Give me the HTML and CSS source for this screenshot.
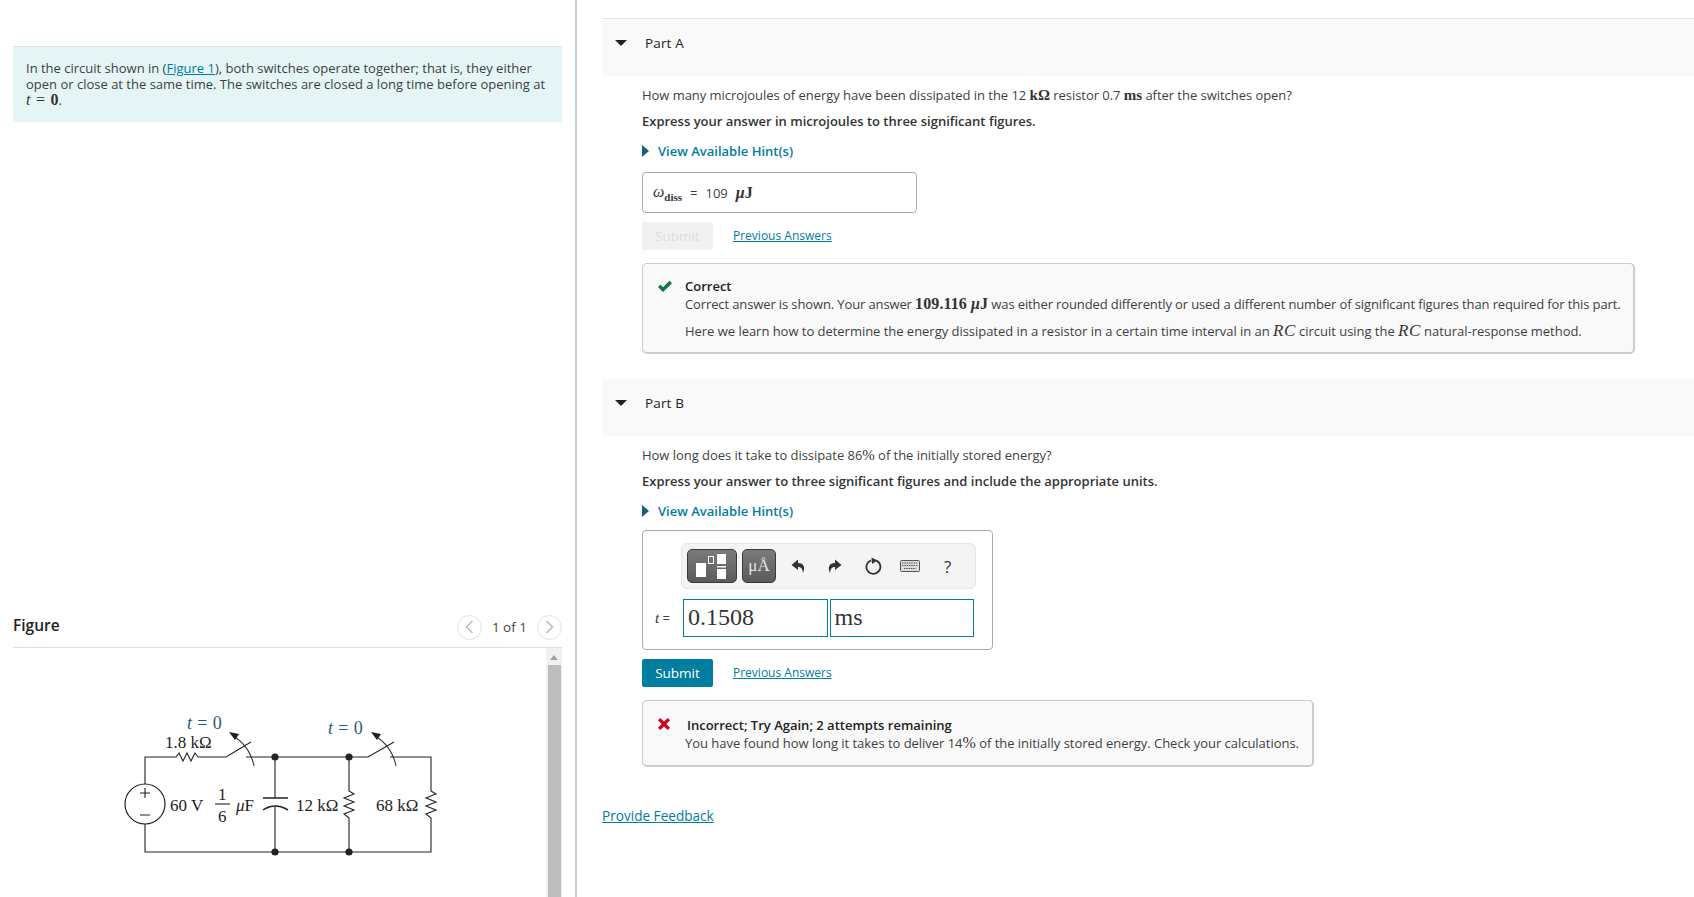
FILE: index.html
```html
<!DOCTYPE html>
<html lang="en">
<head>
    <meta charset="UTF-8">
    <title>Part A and Part B</title>
    <link rel="stylesheet" href="styles.css">
</head>
<body>
    <!-- Left pane: intro and figure -->
    <div class="left-pane">
        <div class="intro">
            In the circuit shown in (<a href="#">Figure 1</a>), both switches operate together; that is, they either open or close at the same time. The switches are closed a long time before opening at <span class="math"><i>t</i> = <b>0</b></span>.
        </div>

        <div class="figure-head">
            <h2>Figure</h2>
            <div class="pager">
                <span class="pager-btn">
                    <svg width="9" height="14" viewBox="0 0 9 14"><path d="M7.5 1 L1.5 7 L7.5 13" fill="none" stroke="#b4bcc6" stroke-width="1.6"/></svg>
                </span>
                <span class="pager-text">1 of 1</span>
                <span class="pager-btn">
                    <svg width="9" height="14" viewBox="0 0 9 14"><path d="M1.5 1 L7.5 7 L1.5 13" fill="none" stroke="#b4bcc6" stroke-width="1.6"/></svg>
                </span>
            </div>
        </div>

        <div class="figure-body">
            <div class="figure-view">
                <svg class="circuit" width="360" height="180" viewBox="0 0 360 180">
                    <g fill="none" stroke="#222" stroke-width="1.1">
                        <path d="M45 94 V67 H76 L79 63 L83 71 L87 63 L91 71 L95 63 L98 67 H126 L151 52"/>
                        <path d="M146 67 H268 L294 52"/>
                        <path d="M290 67 H331 V101 L336 104 L326 108 L336 112 L326 116 L336 120 L326 124 L331 128 V162 H45 V134"/>
                        <path d="M249 67 V101 L254 104 L244 108 L254 112 L244 116 L254 120 L244 124 L249 128 V162"/>
                        <path d="M175 67 V108 M175 117 V162"/>
                        <path d="M163 108 H188" stroke-width="1.5"/>
                        <path d="M163 120 Q175 112 188 120" stroke-width="1.5"/>
                        <circle cx="45" cy="114" r="20" stroke-width="1.2"/>
                        <path d="M40 103 H50 M45 98 V108 M40 125 H50"/>
                        <path d="M115 114 H130"/>
                        <path d="M154 76 Q150 56 132 45" stroke="#333"/>
                        <path d="M296 76 Q292 56 274 45" stroke="#333"/>
                    </g>
                    <path d="M129 42 L139 44 L135 50 Z M271 42 L281 44 L277 50 Z" fill="#222"/>
                    <g fill="#222">
                        <circle cx="175" cy="67" r="3.6"/>
                        <circle cx="249" cy="67" r="3.6"/>
                        <circle cx="175" cy="162" r="3.6"/>
                        <circle cx="249" cy="162" r="3.6"/>
                    </g>
                    <g class="circuit-label">
                        <text x="87" y="39" class="circuit-t"><tspan font-style="italic">t</tspan> = 0</text>
                        <text x="228" y="44" class="circuit-t"><tspan font-style="italic">t</tspan> = 0</text>
                        <text x="65" y="58">1.8 kΩ</text>
                        <text x="70" y="121">60 V</text>
                        <text x="118" y="110">1</text>
                        <text x="118" y="132">6</text>
                        <text x="136" y="121"><tspan font-style="italic">μ</tspan>F</text>
                        <text x="196" y="121">12 kΩ</text>
                        <text x="276" y="121">68 kΩ</text>
                    </g>
                </svg>
            </div>
            <div class="scrollbar">
                <span class="scroll-arrow"></span>
                <span class="scroll-thumb"></span>
            </div>
        </div>
    </div>

    <!-- Right pane: the parts -->
    <div class="right-pane">
        <div class="part-head first">
            <span class="caret-down"></span>
            <span class="part-title">Part A</span>
        </div>
        <div class="part-body">
            <p class="question">How many microjoules of energy have been dissipated in the 12 <b class="math">kΩ</b> resistor 0.7 <b class="math">ms</b> after the switches open?</p>
            <p class="instruction">Express your answer in microjoules to three significant figures.</p>
            <a class="hint" href="#"><span class="caret-right"></span>View Available Hint(s)</a>

            <div class="answer-box">
                <span class="math"><i class="omega">ω</i><sub>diss</sub></span>
                <span class="equals">=</span>
                <span>109</span>
                <span class="math unit"><i>μ</i>J</span>
            </div>

            <div class="actions">
                <button class="submit disabled">Submit</button>
                <a class="prev" href="#">Previous Answers</a>
            </div>

            <div class="feedback wide">
                <svg class="fb-icon" width="16" height="13" viewBox="0 0 16 13"><path d="M1 7 L3.5 4.6 L6 7.2 L12.6 0.8 L15 3.2 L6 12 Z" fill="#11763d"/></svg>
                <div class="fb-title">Correct</div>
                <div class="fb-line tight">Correct answer is shown. Your answer <b class="math big">109.116 <i>μ</i>J</b> was either rounded differently or used a different number of significant figures than required for this part.</div>
                <div class="fb-line second">Here we learn how to determine the energy dissipated in a resistor in a certain time interval in an <span class="math rc">RC</span> circuit using the <span class="math rc">RC</span> natural-response method.</div>
            </div>
        </div>

        <div class="part-head">
            <span class="caret-down"></span>
            <span class="part-title">Part B</span>
        </div>
        <div class="part-body part-b">
            <p class="question">How long does it take to dissipate 86<span class="math pct">%</span> of the initially stored energy?</p>
            <p class="instruction">Express your answer to three significant figures and include the appropriate units.</p>
            <a class="hint" href="#"><span class="caret-right"></span>View Available Hint(s)</a>

            <div class="math-box">
                <div class="toolbar">
                    <span class="tool-btn templates">
                        <svg width="36" height="26" viewBox="0 0 36 26">
                            <rect x="2" y="10" width="10" height="14" fill="#fff"/>
                            <rect x="14.5" y="3.5" width="5" height="7" fill="none" stroke="#fff"/>
                            <rect x="23" y="1" width="9" height="10" fill="#fff"/>
                            <rect x="23" y="13" width="9" height="1.5" fill="#fff"/>
                            <rect x="23" y="16" width="9" height="10" fill="#fff"/>
                        </svg>
                    </span>
                    <span class="tool-btn units">μÅ</span>
                    <svg class="tool-icon undo" width="16" height="16" viewBox="0 0 16 16"><path d="M8 1.5 L1.5 7 L8 12 V9 C11 9 12.5 10.5 13 15 C15.5 9.5 14 5 8 5 Z" fill="#333"/></svg>
                    <svg class="tool-icon redo" width="16" height="16" viewBox="0 0 16 16"><path d="M8 1.5 L14.5 7 L8 12 V9 C5 9 3.5 10.5 3 15 C0.5 9.5 2 5 8 5 Z" fill="#333"/></svg>
                    <svg class="tool-icon reset" width="18" height="18" viewBox="0 0 18 18"><path d="M11.5 3.6 A7 7 0 1 1 6 3.3" fill="none" stroke="#333" stroke-width="1.8"/><path d="M6.5 0.5 L12.5 3.6 L7 7 Z" fill="#333"/></svg>
                    <svg class="tool-icon keys" width="20" height="12" viewBox="0 0 20 12">
                        <rect x="0.5" y="0.5" width="19" height="11" rx="1" fill="#ddd" stroke="#555"/>
                        <path d="M2 3 H18 M2 5.5 H18 M4 8.5 H16" stroke="#555" stroke-width="1.2" stroke-dasharray="1.5 0.8"/>
                    </svg>
                    <span class="tool-help">?</span>
                </div>
                <div class="input-row">
                    <span class="input-label"><i class="math">t</i> =</span>
                    <span class="input-cell">0.1508</span>
                    <span class="input-cell">ms</span>
                </div>
            </div>

            <div class="actions">
                <button class="submit">Submit</button>
                <a class="prev" href="#">Previous Answers</a>
            </div>

            <div class="feedback narrow">
                <svg class="fb-icon" width="14" height="14" viewBox="0 0 14 14"><path d="M1 3.2 L3.2 1 L7 4.6 L10.8 1 L13 3.2 L9.3 7 L13 10.8 L10.8 13 L7 9.4 L3.2 13 L1 10.8 L4.7 7 Z" fill="#d0021b"/></svg>
                <div class="fb-title bad">Incorrect; Try Again; 2 attempts remaining</div>
                <div class="fb-line">You have found how long it takes to deliver 14<span class="math pct">%</span> of the initially stored energy. Check your calculations.</div>
            </div>
        </div>

        <a class="provide" href="#">Provide Feedback</a>
    </div>
</body>
</html>
```

FILE: styles.css
```css
/* Basic styling */
html, body {
    height: 100%;
}

body {
    margin: 0;
    display: flex;
    overflow: hidden;
    background: white;
    color: #3f3f3f;
    font-family: "Open Sans", "Noto Sans", sans-serif;
    font-size: 13px;
}

a {
    color: #007c9e;
}

.math {
    font-family: "Liberation Serif", serif;
    color: #333;
}

/* Left pane */
.left-pane {
    box-sizing: border-box;
    width: 577px;
    flex-shrink: 0;
    height: 897px;
    padding: 46px 13px 0 13px;
    border-right: 2px solid #c3d3e6;
    display: flex;
    flex-direction: column;
}

.left-pane > * {
    width: 549px;
}

.intro {
    box-sizing: border-box;
    height: 76px;
    padding: 13px 13px;
    line-height: 16px;
    background: #e5f5f6;
    border-top: 1px solid #d8e4e6;
}

.intro .math {
    font-size: 16px;
    word-spacing: 1.5px;
}

.figure-head {
    display: flex;
    justify-content: space-between;
    align-items: center;
    height: 36px;
    margin-top: 485px;
    padding-bottom: 4px;
    border-bottom: 1px solid #ddd;
}

.figure-head h2 {
    margin: 0;
    font-size: 15.5px;
    font-weight: 600;
    color: #222;
}

.pager {
    display: flex;
    align-items: center;
    gap: 10px;
    margin-bottom: -4px;
    color: #444;
    font-size: 13.5px;
}

.pager-btn {
    box-sizing: border-box;
    width: 25px;
    height: 25px;
    border: 1px solid #e2e2e2;
    border-radius: 50%;
    display: flex;
    align-items: center;
    justify-content: center;
}

.figure-body {
    display: flex;
    flex: 1;
    min-height: 0;
}

.figure-view {
    flex: 1;
    padding: 42px 0 0 87px;
}

.circuit {
    display: block;
}

.circuit-label {
    font-family: "Liberation Serif", serif;
    font-size: 17px;
    fill: #222;
}

.circuit-t {
    fill: #2b5c7c;
    font-size: 18px;
    letter-spacing: 0.4px;
}

.scrollbar {
    width: 16px;
    background: #f1f1f1;
    display: flex;
    flex-direction: column;
    align-items: center;
}

.scroll-arrow {
    margin-top: 7px;
    border-left: 4px solid transparent;
    border-right: 4px solid transparent;
    border-bottom: 5px solid #a3a3a3;
}

.scroll-thumb {
    width: 13px;
    flex: 1;
    margin-top: 5px;
    background: #bdbdbd;
}

/* Right pane */
.right-pane {
    flex: 1;
    min-width: 0;
    padding: 0 0 0 25px;
}

.part-head {
    height: 57px;
    margin-top: 25px;
    display: flex;
    align-items: center;
    background: #f9f9f9;
}

.part-head.first {
    margin-top: 18px;
    border-top: 1px solid #e2e2e2;
}

.caret-down {
    width: 0;
    height: 0;
    margin-left: 13px;
    margin-bottom: 10px;
    border-left: 6px solid transparent;
    border-right: 6px solid transparent;
    border-top: 6px solid #222;
}

.part-title {
    margin-left: 18px;
    margin-bottom: 10px;
    color: #222;
    font-size: 13.5px;
    font-weight: 500;
    letter-spacing: 0.15px;
}

.part-body {
    padding: 9px 0 0 40px;
}

.question {
    margin: 0;
    line-height: 20px;
    letter-spacing: -0.04px;
}

.question .math {
    font-size: 15px;
}

.instruction {
    margin: 6px 0 0;
    line-height: 20px;
    font-weight: 600;
    color: #333;
}

.pct {
    font-size: 16px;
}

.hint {
    display: block;
    margin-top: 10px;
    line-height: 20px;
    font-weight: 600;
    text-decoration: none;
}

.caret-right {
    display: inline-block;
    margin-right: 9px;
    border-top: 6px solid transparent;
    border-bottom: 6px solid transparent;
    border-left: 7px solid #14607f;
    vertical-align: -1px;
}

.answer-box {
    box-sizing: border-box;
    width: 275px;
    height: 41px;
    margin-top: 11px;
    padding: 0 10px;
    display: flex;
    align-items: center;
    gap: 8px;
    border: 1px solid #aaa;
    border-radius: 4px;
}

.omega {
    font-size: 16px;
}

.answer-box sub {
    font-size: 11px;
    font-weight: bold;
}

.unit {
    font-size: 16px;
    font-weight: bold;
}

.actions {
    display: flex;
    align-items: flex-start;
    gap: 20px;
    margin-top: 9px;
}

.submit {
    width: 71px;
    height: 28px;
    padding: 0;
    border: none;
    border-radius: 2px;
    background: #007d9f;
    color: white;
    font-family: inherit;
    font-size: 13.5px;
}

.submit.disabled {
    background: #f1f1f1;
    color: #dedede;
}

.prev {
    margin-top: 5px;
    font-weight: 500;
    line-height: 18px;
    font-size: 12px;
}

.feedback {
    box-sizing: border-box;
    position: relative;
    margin-top: 13px;
    padding-left: 42px;
    background: #f9f9f9;
    border: 1px solid #ccc;
    border-bottom-width: 2px;
    border-right-width: 2px;
    border-radius: 5px;
}

.feedback.wide {
    width: 993px;
    height: 91px;
    padding-top: 14px;
}

.feedback.narrow {
    width: 672px;
    height: 67px;
    margin-top: 13px;
    padding-top: 16px;
}

.fb-icon {
    position: absolute;
    left: 14px;
    top: 16px;
}

.fb-title {
    line-height: 16px;
    font-weight: 600;
    color: #222;
}

.fb-title.bad {
    margin-left: 2px;
}

.fb-line {
    line-height: 18px;
    margin-top: 1px;
    white-space: nowrap;
    letter-spacing: -0.03px;
}

.fb-line.tight {
    letter-spacing: -0.12px;
}

.fb-line.second {
    margin-top: 9px;
    letter-spacing: -0.03px;
}

.big {
    font-size: 16px;
    letter-spacing: 0.1px;
}

.rc {
    font-style: italic;
    font-size: 17px;
    letter-spacing: 0.5px;
}

/* Math input box */
.math-box {
    box-sizing: border-box;
    width: 351px;
    height: 120px;
    margin-top: 9px;
    padding: 12px 18px 0 12px;
    border: 1px solid #aaa;
    border-radius: 4px;
}

.toolbar {
    box-sizing: border-box;
    width: 295px;
    height: 46px;
    margin-left: 26px;
    padding-left: 5px;
    display: flex;
    align-items: center;
    background: #f4f4f4;
    border: 1px solid #e6e6e6;
    border-radius: 6px;
}

.tool-btn {
    box-sizing: border-box;
    height: 34px;
    display: flex;
    align-items: center;
    justify-content: center;
    background: linear-gradient(#7b7b7b, #5b5b5b);
    border: 1px solid #3a3a3a;
    border-radius: 5px;
}

.templates {
    width: 50px;
}

.units {
    width: 34px;
    margin-left: 5px;
    color: #e4e4e4;
    font-family: "Liberation Serif", serif;
    font-size: 17px;
}

.undo {
    margin-left: 14px;
}

.redo {
    margin-left: 21px;
}

.reset {
    margin-left: 22px;
}

.keys {
    margin-left: 17px;
}

.tool-help {
    margin-left: 24px;
    font-size: 17px;
    color: #333;
}

.input-row {
    display: flex;
    align-items: center;
    gap: 2px;
    margin-top: 10px;
}

.input-label {
    width: 26px;
    flex-shrink: 0;
}

.input-label .math {
    font-size: 15px;
}

.input-cell {
    box-sizing: border-box;
    width: 145px;
    height: 38px;
    padding-left: 4px;
    border: 1px solid #007c9e;
    font-family: "Liberation Serif", serif;
    font-size: 24px;
    line-height: 34px;
    color: #333;
}

.provide {
    display: block;
    margin-top: 39px;
    font-size: 13.6px;
}
```
